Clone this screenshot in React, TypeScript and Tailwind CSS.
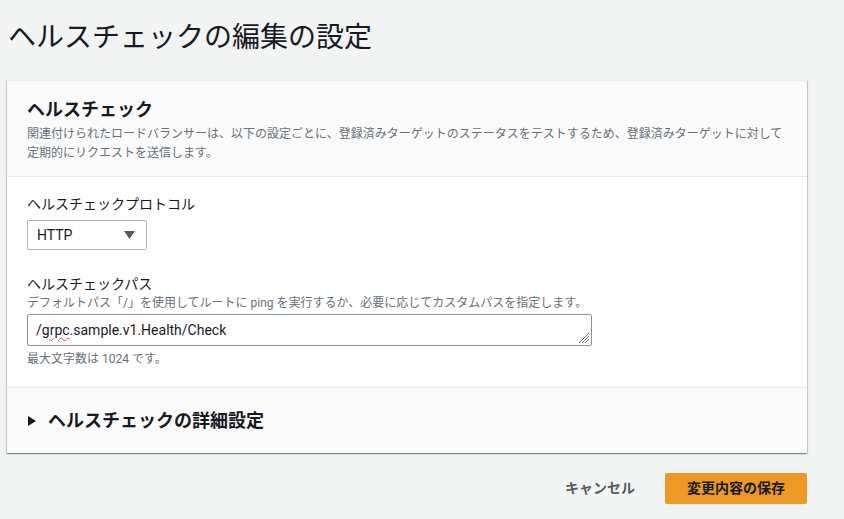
export default function App() {
    return (
        <div
            className="min-h-[519px] bg-[#f2f3f3] text-[#16191f]"
            style={{ fontFamily: 'Roboto, "Noto Sans CJK JP", sans-serif' }}
        >
            <div className="w-[807px] pl-[7px] pt-[20px]">
                {/* Page title */}
                <h1 className="pl-px text-[28px] leading-[36px] font-normal text-[#16191f]">
                    ヘルスチェックの編集の設定
                </h1>

                {/* Card */}
                <div className="mt-[24px] bg-white border-t border-[#eaeded] shadow-[0_1px_1px_0_rgba(0,28,36,0.3),1px_1px_1px_0_rgba(0,28,36,0.15),-1px_1px_1px_0_rgba(0,28,36,0.15)]">
                    {/* Header */}
                    <div className="bg-[#fafafa] border-b border-[#eaeded] px-[20px] pt-[17px] pb-[13px]">
                        <h2 className="text-[18px] leading-[24px] font-bold">ヘルスチェック</h2>
                        <p className="mt-[3px] text-[12px] leading-[19px] text-[#687078]">
                            関連付けられたロードバランサーは、以下の設定ごとに、登録済みターゲットのステータスをテストするため、登録済みターゲットに対して定期的にリクエストを送信します。
                        </p>
                    </div>

                    {/* Body */}
                    <div className="px-[20px] pt-[16px] pb-[20px] border-b border-[#eaeded]">
                        <label className="block text-[14px] leading-[22px]">ヘルスチェックプロトコル</label>
                        <div className="mt-[5px] flex items-center justify-between w-[120px] h-[30px] border border-[#aab7b8] rounded-[2px] pl-[9px] pr-[11px]">
                            <span className="text-[14px]">HTTP</span>
                            <svg width="11" height="8" viewBox="0 0 11 8">
                                <path d="M0 0 L11 0 L5.5 8 Z" fill="#545b64" />
                            </svg>
                        </div>

                        <label className="block mt-[23px] text-[14px] leading-[22px]">ヘルスチェックパス</label>
                        <p className="text-[12px] leading-[16px] text-[#687078]">
                            デフォルトパス「/」を使用してルートに ping を実行するか、必要に応じてカスタムパスを指定します。
                        </p>
                        <div className="relative mt-[3px] w-[565px] h-[32px] border border-[#879596] rounded-[2px] pl-[8px] flex items-center">
                            <span className="text-[14px]">
                                /<span className="underline decoration-wavy decoration-[#e0433c] decoration-1 underline-offset-2">grpc</span>.sample.v1.Health/Check
                            </span>
                            <svg className="absolute right-[1px] bottom-[1px]" width="13" height="13" viewBox="0 0 13 13">
                                <path d="M12 2 L2 12 M12 5 L5 12 M12 8 L8 12" stroke="#6b6b6b" strokeWidth="1" />
                            </svg>
                        </div>
                        <p className="mt-[5px] text-[12px] leading-[16px] text-[#687078]">最大文字数は 1024 です。</p>
                    </div>

                    {/* Expandable section */}
                    <div className="bg-[#fafafa] h-[65px] flex items-center px-[20px]">
                        <svg width="8" height="10" viewBox="0 0 8 10" className="ml-[1px]">
                            <path d="M0 0 L8 5 L0 10 Z" fill="#16191f" />
                        </svg>
                        <span className="ml-[12px] text-[18px] font-bold">ヘルスチェックの詳細設定</span>
                    </div>
                </div>

                {/* Actions */}
                <div className="mt-[20px] flex justify-end items-center gap-[10px]">
                    <button className="h-[31px] px-[20px] text-[14px] font-bold text-[#545b64]">キャンセル</button>
                    <button className="h-[31px] w-[142px] rounded-[2px] bg-[#ec9a25] text-[14px] font-bold text-[#16191f]">
                        変更内容の保存
                    </button>
                </div>
            </div>
        </div>
    );
}
